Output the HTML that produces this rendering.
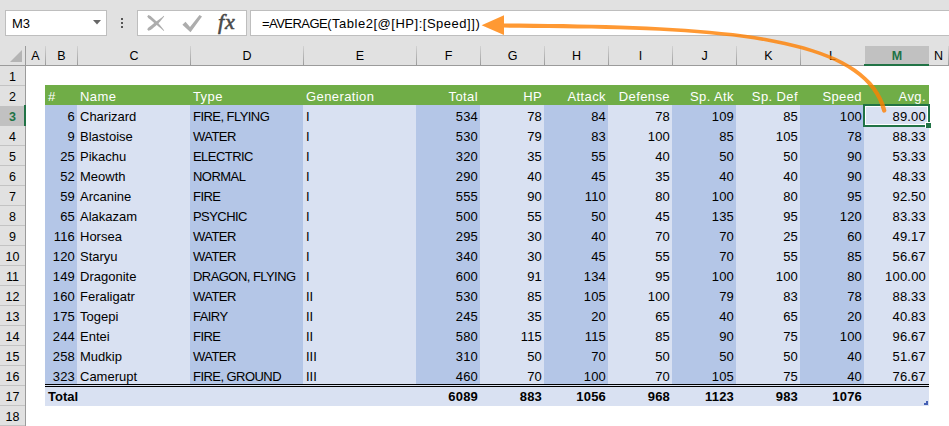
<!DOCTYPE html>
<html><head><meta charset="utf-8"><title>Table formula</title>
<style>
html,body{margin:0;padding:0}
body{width:949px;height:426px;overflow:hidden;position:relative;background:#fff;font-family:"Liberation Sans",sans-serif;font-size:13px;color:#000;line-height:20px}
div,span{position:absolute;box-sizing:border-box;white-space:nowrap}
.g{background:#e1e1e1}
.box{background:#fff;border:1px solid #bebebe;top:10px;height:26px}
.ch{top:46px;height:19px;text-align:center;line-height:21px;font-size:12.5px}
.rh{left:0;width:25px;height:20px;text-align:center;line-height:24px;font-size:12.5px}
.vs{top:46px;width:1px;height:19px;background:linear-gradient(to bottom,#d2d2d2,#9c9c9c)}
.hs{left:0;width:25px;height:1px;background:#c3c3c3}
.c{height:20px;line-height:23px;padding:0 3px}
.i{position:static}
.r{text-align:right}
.h{color:#fff}
.b{font-weight:bold}
.sel{background:#c1c1c1;color:#217346;font-weight:bold}
</style></head><body>

<div class="g" style="left:0;top:0;width:949px;height:66px"></div>
<div class="g" style="left:0;top:66px;width:26px;height:360px"></div>
<div class="box" style="left:5px;width:102px"><span style="left:6px;top:3px;font-size:13px;line-height:20px">M3</span><svg style="position:absolute;left:87px;top:9px" width="8" height="5" viewBox="0 0 8 5"><path d="M0 0H8L4 4.5Z" fill="#666"/></svg></div>
<div style="left:121px;top:18px;width:2px;height:2px;background:#555"></div>
<div style="left:121px;top:22px;width:2px;height:2px;background:#555"></div>
<div style="left:121px;top:26px;width:2px;height:2px;background:#555"></div>
<div class="box" style="left:137px;width:110px"><span style="left:80px;top:-2px;font-family:'Liberation Serif',serif;font-style:italic;font-size:22px;line-height:26px;color:#4a4a4a;letter-spacing:1px;-webkit-text-stroke:0.6px #4a4a4a">fx</span></div>
<svg style="position:absolute;left:0;top:0" width="260" height="45" viewBox="0 0 260 45"><path d="M147.2 16.5L148.5 18.3L150.3 19.6L152.0 21.0L153.7 22.5L155.3 23.9L157.1 25.3L158.8 26.7L160.5 28.1L162.1 29.6L163.8 31.1L164.2 30.5L162.9 28.8L161.5 27.0L160.1 25.3L158.6 23.6L157.2 21.9L155.5 20.4L153.9 18.9L152.2 17.5L150.6 16.1L148.4 15.1Z" fill="#adadad"/><path d="M148.4 30.8L150.6 30.0L152.3 28.7L154.0 27.3L155.6 26.0L157.2 24.6L158.7 23.0L160.1 21.4L161.5 19.7L162.9 18.1L164.2 16.4L163.8 15.8L162.1 17.2L160.4 18.5L158.7 19.8L157.0 21.1L155.3 22.3L153.6 23.6L151.9 25.0L150.2 26.2L148.5 27.5L147.2 29.2Z" fill="#adadad"/><path d="M182.4 24.7L185.5 21.8L190 27L199.5 15.1L202 16.6L190.5 32.2Z" fill="#adadad"/></svg>
<div class="box" style="left:250px;width:720px"><span id="fml" style="left:11px;top:3px;font-size:13px;line-height:20px;letter-spacing:0.52px"><span class="i" style="letter-spacing:-0.54px">=AVERAGE</span>(Table2[@[HP]:[Speed]])</span></div>
<div style="left:0;top:65px;width:949px;height:1px;background:#9b9b9b"></div>
<div style="left:25px;top:46px;width:1px;height:380px;background:#9b9b9b"></div>
<svg style="position:absolute;left:10px;top:50px" width="12" height="12" viewBox="0 0 12 12"><path d="M12 0V12H0Z" fill="#b4b4b4"/></svg>
<div class="ch" style="left:26px;width:19px">A</div>
<div class="vs" style="left:45px"></div>
<div class="ch" style="left:46px;width:31px">B</div>
<div class="vs" style="left:77px"></div>
<div class="ch" style="left:78px;width:112px">C</div>
<div class="vs" style="left:190px"></div>
<div class="ch" style="left:191px;width:112px">D</div>
<div class="vs" style="left:303px"></div>
<div class="ch" style="left:304px;width:112px">E</div>
<div class="vs" style="left:416px"></div>
<div class="ch" style="left:417px;width:63px">F</div>
<div class="vs" style="left:480px"></div>
<div class="ch" style="left:481px;width:63px">G</div>
<div class="vs" style="left:544px"></div>
<div class="ch" style="left:545px;width:63px">H</div>
<div class="vs" style="left:608px"></div>
<div class="ch" style="left:609px;width:63px">I</div>
<div class="vs" style="left:672px"></div>
<div class="ch" style="left:673px;width:63px">J</div>
<div class="vs" style="left:736px"></div>
<div class="ch" style="left:737px;width:63px">K</div>
<div class="vs" style="left:800px"></div>
<div class="ch" style="left:801px;width:63px">L</div>
<div class="ch sel" style="left:865px;width:64px">M</div>
<div class="ch" style="left:929px;width:19px">N</div>
<div class="vs" style="left:948px"></div>
<div style="left:864px;top:64px;width:65px;height:2px;background:#217346"></div>
<div class="rh" style="top:65px">1</div>
<div class="hs" style="top:85px"></div>
<div class="rh" style="top:85px">2</div>
<div class="rh" style="top:106px;height:20px;background:#c1c1c1"></div>
<div class="rh b" style="color:#217346;top:105px">3</div>
<div class="rh" style="top:125px">4</div>
<div class="hs" style="top:145px"></div>
<div class="rh" style="top:145px">5</div>
<div class="hs" style="top:165px"></div>
<div class="rh" style="top:165px">6</div>
<div class="hs" style="top:185px"></div>
<div class="rh" style="top:185px">7</div>
<div class="hs" style="top:205px"></div>
<div class="rh" style="top:205px">8</div>
<div class="hs" style="top:225px"></div>
<div class="rh" style="top:225px">9</div>
<div class="hs" style="top:245px"></div>
<div class="rh" style="top:245px">10</div>
<div class="hs" style="top:265px"></div>
<div class="rh" style="top:265px">11</div>
<div class="hs" style="top:285px"></div>
<div class="rh" style="top:285px">12</div>
<div class="hs" style="top:305px"></div>
<div class="rh" style="top:305px">13</div>
<div class="hs" style="top:325px"></div>
<div class="rh" style="top:325px">14</div>
<div class="hs" style="top:345px"></div>
<div class="rh" style="top:345px">15</div>
<div class="hs" style="top:365px"></div>
<div class="rh" style="top:365px">16</div>
<div class="hs" style="top:385px"></div>
<div class="rh" style="top:385px">17</div>
<div class="hs" style="top:405px"></div>
<div class="rh" style="top:405px">18</div>
<div class="hs" style="top:425px"></div>
<div style="left:24px;top:105px;width:2px;height:21px;background:#217346"></div>
<div style="left:45px;top:85px;width:884px;height:20px;background:#70ad47"></div>
<div style="left:45px;top:105px;width:32px;height:280px;background:#b4c6e7"></div>
<div style="left:77px;top:105px;width:113px;height:280px;background:#d9e1f2"></div>
<div style="left:190px;top:105px;width:113px;height:280px;background:#b4c6e7"></div>
<div style="left:303px;top:105px;width:113px;height:280px;background:#d9e1f2"></div>
<div style="left:416px;top:105px;width:64px;height:280px;background:#b4c6e7"></div>
<div style="left:480px;top:105px;width:64px;height:280px;background:#d9e1f2"></div>
<div style="left:544px;top:105px;width:64px;height:280px;background:#b4c6e7"></div>
<div style="left:608px;top:105px;width:64px;height:280px;background:#d9e1f2"></div>
<div style="left:672px;top:105px;width:64px;height:280px;background:#b4c6e7"></div>
<div style="left:736px;top:105px;width:64px;height:280px;background:#d9e1f2"></div>
<div style="left:800px;top:105px;width:64px;height:280px;background:#b4c6e7"></div>
<div style="left:864px;top:105px;width:65px;height:280px;background:#d9e1f2"></div>
<div style="left:45px;top:384px;width:884px;height:22px;background:#d9e1f2;border-top:3px double #000"></div>
<div class="c h" style="left:45px;top:85px;width:33px;letter-spacing:0.4px">#</div>
<div class="c h" style="left:77px;top:85px;width:114px;letter-spacing:0.4px">Name</div>
<div class="c h" style="left:190px;top:85px;width:114px;letter-spacing:0.4px">Type</div>
<div class="c h" style="left:303px;top:85px;width:114px;letter-spacing:0.4px">Generation</div>
<div class="c r h" style="left:416px;top:85px;width:65px;letter-spacing:0.4px">Total</div>
<div class="c r h" style="left:480px;top:85px;width:65px;letter-spacing:0.4px">HP</div>
<div class="c r h" style="left:544px;top:85px;width:65px;letter-spacing:0.4px">Attack</div>
<div class="c r h" style="left:608px;top:85px;width:65px;letter-spacing:0.4px">Defense</div>
<div class="c r h" style="left:672px;top:85px;width:65px;letter-spacing:0.4px">Sp. Atk</div>
<div class="c r h" style="left:736px;top:85px;width:65px;letter-spacing:0.4px">Sp. Def</div>
<div class="c r h" style="left:800px;top:85px;width:65px;letter-spacing:0.4px">Speed</div>
<div class="c r h" style="left:864px;top:85px;width:65px;letter-spacing:0.4px">Avg.</div>
<div class="c r" style="left:45px;top:105px;width:33px;letter-spacing:0.2px">6</div>
<div class="c" style="left:77px;top:105px;width:114px">Charizard</div>
<div class="c" style="left:190px;top:105px;width:114px;letter-spacing:-0.55px">FIRE, FLYING</div>
<div class="c" style="left:303px;top:105px;width:114px">I</div>
<div class="c r" style="left:416px;top:105px;width:65px;letter-spacing:0.2px">534</div>
<div class="c r" style="left:480px;top:105px;width:65px;letter-spacing:0.2px">78</div>
<div class="c r" style="left:544px;top:105px;width:65px;letter-spacing:0.2px">84</div>
<div class="c r" style="left:608px;top:105px;width:65px;letter-spacing:0.2px">78</div>
<div class="c r" style="left:672px;top:105px;width:65px;letter-spacing:0.2px">109</div>
<div class="c r" style="left:736px;top:105px;width:65px;letter-spacing:0.2px">85</div>
<div class="c r" style="left:800px;top:105px;width:65px;letter-spacing:0.2px">100</div>
<div class="c r" style="left:864px;top:105px;width:65px;letter-spacing:0.2px">89.00</div>
<div class="c r" style="left:45px;top:125px;width:33px;letter-spacing:0.2px">9</div>
<div class="c" style="left:77px;top:125px;width:114px">Blastoise</div>
<div class="c" style="left:190px;top:125px;width:114px;letter-spacing:-0.55px">WATER</div>
<div class="c" style="left:303px;top:125px;width:114px">I</div>
<div class="c r" style="left:416px;top:125px;width:65px;letter-spacing:0.2px">530</div>
<div class="c r" style="left:480px;top:125px;width:65px;letter-spacing:0.2px">79</div>
<div class="c r" style="left:544px;top:125px;width:65px;letter-spacing:0.2px">83</div>
<div class="c r" style="left:608px;top:125px;width:65px;letter-spacing:0.2px">100</div>
<div class="c r" style="left:672px;top:125px;width:65px;letter-spacing:0.2px">85</div>
<div class="c r" style="left:736px;top:125px;width:65px;letter-spacing:0.2px">105</div>
<div class="c r" style="left:800px;top:125px;width:65px;letter-spacing:0.2px">78</div>
<div class="c r" style="left:864px;top:125px;width:65px;letter-spacing:0.2px">88.33</div>
<div class="c r" style="left:45px;top:145px;width:33px;letter-spacing:0.2px">25</div>
<div class="c" style="left:77px;top:145px;width:114px">Pikachu</div>
<div class="c" style="left:190px;top:145px;width:114px;letter-spacing:-0.55px">ELECTRIC</div>
<div class="c" style="left:303px;top:145px;width:114px">I</div>
<div class="c r" style="left:416px;top:145px;width:65px;letter-spacing:0.2px">320</div>
<div class="c r" style="left:480px;top:145px;width:65px;letter-spacing:0.2px">35</div>
<div class="c r" style="left:544px;top:145px;width:65px;letter-spacing:0.2px">55</div>
<div class="c r" style="left:608px;top:145px;width:65px;letter-spacing:0.2px">40</div>
<div class="c r" style="left:672px;top:145px;width:65px;letter-spacing:0.2px">50</div>
<div class="c r" style="left:736px;top:145px;width:65px;letter-spacing:0.2px">50</div>
<div class="c r" style="left:800px;top:145px;width:65px;letter-spacing:0.2px">90</div>
<div class="c r" style="left:864px;top:145px;width:65px;letter-spacing:0.2px">53.33</div>
<div class="c r" style="left:45px;top:165px;width:33px;letter-spacing:0.2px">52</div>
<div class="c" style="left:77px;top:165px;width:114px">Meowth</div>
<div class="c" style="left:190px;top:165px;width:114px;letter-spacing:-0.55px">NORMAL</div>
<div class="c" style="left:303px;top:165px;width:114px">I</div>
<div class="c r" style="left:416px;top:165px;width:65px;letter-spacing:0.2px">290</div>
<div class="c r" style="left:480px;top:165px;width:65px;letter-spacing:0.2px">40</div>
<div class="c r" style="left:544px;top:165px;width:65px;letter-spacing:0.2px">45</div>
<div class="c r" style="left:608px;top:165px;width:65px;letter-spacing:0.2px">35</div>
<div class="c r" style="left:672px;top:165px;width:65px;letter-spacing:0.2px">40</div>
<div class="c r" style="left:736px;top:165px;width:65px;letter-spacing:0.2px">40</div>
<div class="c r" style="left:800px;top:165px;width:65px;letter-spacing:0.2px">90</div>
<div class="c r" style="left:864px;top:165px;width:65px;letter-spacing:0.2px">48.33</div>
<div class="c r" style="left:45px;top:185px;width:33px;letter-spacing:0.2px">59</div>
<div class="c" style="left:77px;top:185px;width:114px">Arcanine</div>
<div class="c" style="left:190px;top:185px;width:114px;letter-spacing:-0.55px">FIRE</div>
<div class="c" style="left:303px;top:185px;width:114px">I</div>
<div class="c r" style="left:416px;top:185px;width:65px;letter-spacing:0.2px">555</div>
<div class="c r" style="left:480px;top:185px;width:65px;letter-spacing:0.2px">90</div>
<div class="c r" style="left:544px;top:185px;width:65px;letter-spacing:0.2px">110</div>
<div class="c r" style="left:608px;top:185px;width:65px;letter-spacing:0.2px">80</div>
<div class="c r" style="left:672px;top:185px;width:65px;letter-spacing:0.2px">100</div>
<div class="c r" style="left:736px;top:185px;width:65px;letter-spacing:0.2px">80</div>
<div class="c r" style="left:800px;top:185px;width:65px;letter-spacing:0.2px">95</div>
<div class="c r" style="left:864px;top:185px;width:65px;letter-spacing:0.2px">92.50</div>
<div class="c r" style="left:45px;top:205px;width:33px;letter-spacing:0.2px">65</div>
<div class="c" style="left:77px;top:205px;width:114px">Alakazam</div>
<div class="c" style="left:190px;top:205px;width:114px;letter-spacing:-0.55px">PSYCHIC</div>
<div class="c" style="left:303px;top:205px;width:114px">I</div>
<div class="c r" style="left:416px;top:205px;width:65px;letter-spacing:0.2px">500</div>
<div class="c r" style="left:480px;top:205px;width:65px;letter-spacing:0.2px">55</div>
<div class="c r" style="left:544px;top:205px;width:65px;letter-spacing:0.2px">50</div>
<div class="c r" style="left:608px;top:205px;width:65px;letter-spacing:0.2px">45</div>
<div class="c r" style="left:672px;top:205px;width:65px;letter-spacing:0.2px">135</div>
<div class="c r" style="left:736px;top:205px;width:65px;letter-spacing:0.2px">95</div>
<div class="c r" style="left:800px;top:205px;width:65px;letter-spacing:0.2px">120</div>
<div class="c r" style="left:864px;top:205px;width:65px;letter-spacing:0.2px">83.33</div>
<div class="c r" style="left:45px;top:225px;width:33px;letter-spacing:0.2px">116</div>
<div class="c" style="left:77px;top:225px;width:114px">Horsea</div>
<div class="c" style="left:190px;top:225px;width:114px;letter-spacing:-0.55px">WATER</div>
<div class="c" style="left:303px;top:225px;width:114px">I</div>
<div class="c r" style="left:416px;top:225px;width:65px;letter-spacing:0.2px">295</div>
<div class="c r" style="left:480px;top:225px;width:65px;letter-spacing:0.2px">30</div>
<div class="c r" style="left:544px;top:225px;width:65px;letter-spacing:0.2px">40</div>
<div class="c r" style="left:608px;top:225px;width:65px;letter-spacing:0.2px">70</div>
<div class="c r" style="left:672px;top:225px;width:65px;letter-spacing:0.2px">70</div>
<div class="c r" style="left:736px;top:225px;width:65px;letter-spacing:0.2px">25</div>
<div class="c r" style="left:800px;top:225px;width:65px;letter-spacing:0.2px">60</div>
<div class="c r" style="left:864px;top:225px;width:65px;letter-spacing:0.2px">49.17</div>
<div class="c r" style="left:45px;top:245px;width:33px;letter-spacing:0.2px">120</div>
<div class="c" style="left:77px;top:245px;width:114px">Staryu</div>
<div class="c" style="left:190px;top:245px;width:114px;letter-spacing:-0.55px">WATER</div>
<div class="c" style="left:303px;top:245px;width:114px">I</div>
<div class="c r" style="left:416px;top:245px;width:65px;letter-spacing:0.2px">340</div>
<div class="c r" style="left:480px;top:245px;width:65px;letter-spacing:0.2px">30</div>
<div class="c r" style="left:544px;top:245px;width:65px;letter-spacing:0.2px">45</div>
<div class="c r" style="left:608px;top:245px;width:65px;letter-spacing:0.2px">55</div>
<div class="c r" style="left:672px;top:245px;width:65px;letter-spacing:0.2px">70</div>
<div class="c r" style="left:736px;top:245px;width:65px;letter-spacing:0.2px">55</div>
<div class="c r" style="left:800px;top:245px;width:65px;letter-spacing:0.2px">85</div>
<div class="c r" style="left:864px;top:245px;width:65px;letter-spacing:0.2px">56.67</div>
<div class="c r" style="left:45px;top:265px;width:33px;letter-spacing:0.2px">149</div>
<div class="c" style="left:77px;top:265px;width:114px">Dragonite</div>
<div class="c" style="left:190px;top:265px;width:114px;letter-spacing:-0.55px">DRAGON, FLYING</div>
<div class="c" style="left:303px;top:265px;width:114px">I</div>
<div class="c r" style="left:416px;top:265px;width:65px;letter-spacing:0.2px">600</div>
<div class="c r" style="left:480px;top:265px;width:65px;letter-spacing:0.2px">91</div>
<div class="c r" style="left:544px;top:265px;width:65px;letter-spacing:0.2px">134</div>
<div class="c r" style="left:608px;top:265px;width:65px;letter-spacing:0.2px">95</div>
<div class="c r" style="left:672px;top:265px;width:65px;letter-spacing:0.2px">100</div>
<div class="c r" style="left:736px;top:265px;width:65px;letter-spacing:0.2px">100</div>
<div class="c r" style="left:800px;top:265px;width:65px;letter-spacing:0.2px">80</div>
<div class="c r" style="left:864px;top:265px;width:65px;letter-spacing:0.2px">100.00</div>
<div class="c r" style="left:45px;top:285px;width:33px;letter-spacing:0.2px">160</div>
<div class="c" style="left:77px;top:285px;width:114px">Feraligatr</div>
<div class="c" style="left:190px;top:285px;width:114px;letter-spacing:-0.55px">WATER</div>
<div class="c" style="left:303px;top:285px;width:114px">II</div>
<div class="c r" style="left:416px;top:285px;width:65px;letter-spacing:0.2px">530</div>
<div class="c r" style="left:480px;top:285px;width:65px;letter-spacing:0.2px">85</div>
<div class="c r" style="left:544px;top:285px;width:65px;letter-spacing:0.2px">105</div>
<div class="c r" style="left:608px;top:285px;width:65px;letter-spacing:0.2px">100</div>
<div class="c r" style="left:672px;top:285px;width:65px;letter-spacing:0.2px">79</div>
<div class="c r" style="left:736px;top:285px;width:65px;letter-spacing:0.2px">83</div>
<div class="c r" style="left:800px;top:285px;width:65px;letter-spacing:0.2px">78</div>
<div class="c r" style="left:864px;top:285px;width:65px;letter-spacing:0.2px">88.33</div>
<div class="c r" style="left:45px;top:305px;width:33px;letter-spacing:0.2px">175</div>
<div class="c" style="left:77px;top:305px;width:114px">Togepi</div>
<div class="c" style="left:190px;top:305px;width:114px;letter-spacing:-0.55px">FAIRY</div>
<div class="c" style="left:303px;top:305px;width:114px">II</div>
<div class="c r" style="left:416px;top:305px;width:65px;letter-spacing:0.2px">245</div>
<div class="c r" style="left:480px;top:305px;width:65px;letter-spacing:0.2px">35</div>
<div class="c r" style="left:544px;top:305px;width:65px;letter-spacing:0.2px">20</div>
<div class="c r" style="left:608px;top:305px;width:65px;letter-spacing:0.2px">65</div>
<div class="c r" style="left:672px;top:305px;width:65px;letter-spacing:0.2px">40</div>
<div class="c r" style="left:736px;top:305px;width:65px;letter-spacing:0.2px">65</div>
<div class="c r" style="left:800px;top:305px;width:65px;letter-spacing:0.2px">20</div>
<div class="c r" style="left:864px;top:305px;width:65px;letter-spacing:0.2px">40.83</div>
<div class="c r" style="left:45px;top:325px;width:33px;letter-spacing:0.2px">244</div>
<div class="c" style="left:77px;top:325px;width:114px">Entei</div>
<div class="c" style="left:190px;top:325px;width:114px;letter-spacing:-0.55px">FIRE</div>
<div class="c" style="left:303px;top:325px;width:114px">II</div>
<div class="c r" style="left:416px;top:325px;width:65px;letter-spacing:0.2px">580</div>
<div class="c r" style="left:480px;top:325px;width:65px;letter-spacing:0.2px">115</div>
<div class="c r" style="left:544px;top:325px;width:65px;letter-spacing:0.2px">115</div>
<div class="c r" style="left:608px;top:325px;width:65px;letter-spacing:0.2px">85</div>
<div class="c r" style="left:672px;top:325px;width:65px;letter-spacing:0.2px">90</div>
<div class="c r" style="left:736px;top:325px;width:65px;letter-spacing:0.2px">75</div>
<div class="c r" style="left:800px;top:325px;width:65px;letter-spacing:0.2px">100</div>
<div class="c r" style="left:864px;top:325px;width:65px;letter-spacing:0.2px">96.67</div>
<div class="c r" style="left:45px;top:345px;width:33px;letter-spacing:0.2px">258</div>
<div class="c" style="left:77px;top:345px;width:114px">Mudkip</div>
<div class="c" style="left:190px;top:345px;width:114px;letter-spacing:-0.55px">WATER</div>
<div class="c" style="left:303px;top:345px;width:114px">III</div>
<div class="c r" style="left:416px;top:345px;width:65px;letter-spacing:0.2px">310</div>
<div class="c r" style="left:480px;top:345px;width:65px;letter-spacing:0.2px">50</div>
<div class="c r" style="left:544px;top:345px;width:65px;letter-spacing:0.2px">70</div>
<div class="c r" style="left:608px;top:345px;width:65px;letter-spacing:0.2px">50</div>
<div class="c r" style="left:672px;top:345px;width:65px;letter-spacing:0.2px">50</div>
<div class="c r" style="left:736px;top:345px;width:65px;letter-spacing:0.2px">50</div>
<div class="c r" style="left:800px;top:345px;width:65px;letter-spacing:0.2px">40</div>
<div class="c r" style="left:864px;top:345px;width:65px;letter-spacing:0.2px">51.67</div>
<div class="c r" style="left:45px;top:365px;width:33px;letter-spacing:0.2px">323</div>
<div class="c" style="left:77px;top:365px;width:114px">Camerupt</div>
<div class="c" style="left:190px;top:365px;width:114px;letter-spacing:-0.55px">FIRE, GROUND</div>
<div class="c" style="left:303px;top:365px;width:114px">III</div>
<div class="c r" style="left:416px;top:365px;width:65px;letter-spacing:0.2px">460</div>
<div class="c r" style="left:480px;top:365px;width:65px;letter-spacing:0.2px">70</div>
<div class="c r" style="left:544px;top:365px;width:65px;letter-spacing:0.2px">100</div>
<div class="c r" style="left:608px;top:365px;width:65px;letter-spacing:0.2px">70</div>
<div class="c r" style="left:672px;top:365px;width:65px;letter-spacing:0.2px">105</div>
<div class="c r" style="left:736px;top:365px;width:65px;letter-spacing:0.2px">75</div>
<div class="c r" style="left:800px;top:365px;width:65px;letter-spacing:0.2px">40</div>
<div class="c r" style="left:864px;top:365px;width:65px;letter-spacing:0.2px">76.67</div>
<div class="c b" style="left:45px;top:385px;width:33px">Total</div>
<div class="c r b" style="left:416px;top:385px;width:65px;letter-spacing:0.2px">6089</div>
<div class="c r b" style="left:480px;top:385px;width:65px;letter-spacing:0.2px">883</div>
<div class="c r b" style="left:544px;top:385px;width:65px;letter-spacing:0.2px">1056</div>
<div class="c r b" style="left:608px;top:385px;width:65px;letter-spacing:0.2px">968</div>
<div class="c r b" style="left:672px;top:385px;width:65px;letter-spacing:0.2px">1123</div>
<div class="c r b" style="left:736px;top:385px;width:65px;letter-spacing:0.2px">983</div>
<div class="c r b" style="left:800px;top:385px;width:65px;letter-spacing:0.2px">1076</div>
<div style="left:863px;top:104px;width:67px;height:23px;border:2px solid #217346;box-shadow:inset 0 0 0 1px #fff"></div>
<div style="left:925px;top:122px;width:6px;height:6px;background:#217346;border:1px solid #fff;border-right:0;border-bottom:0"></div>
<svg style="position:absolute;left:924px;top:401px" width="4" height="4" viewBox="0 0 4 4"><path d="M4 0V4H0V2H2V0Z" fill="#4560b4"/></svg>
<svg style="position:absolute;left:0;top:0" width="949" height="426" viewBox="0 0 949 426"><path d="M481.6 25.2L504.0 15.3L504.0 27.6L519.0 27.7L533.8 27.9L548.5 28.0L563.1 28.2L577.5 28.4L591.7 28.6L605.7 28.9L619.5 29.3L633.0 29.7L646.4 30.2L659.5 30.8L672.3 31.5L684.9 32.3L697.3 33.2L709.3 34.2L721.0 35.4L732.5 36.6L743.6 38.0L754.3 39.6L764.8 41.3L774.8 43.2L784.5 45.2L793.9 47.4L802.8 49.7L811.3 52.3L819.5 55.0L827.2 58.0L834.4 61.1L841.2 64.5L847.5 68.1L853.4 71.9L858.8 76.0L863.7 80.2L868.0 84.7L871.9 89.5L875.2 94.5L878.1 99.7L880.3 105.2L882.1 111.0L882.4 111.8L883.1 112.4L883.9 112.7L884.7 112.6L885.5 112.3L886.1 111.6L886.4 110.8L886.3 110.0L884.4 103.8L881.8 97.9L878.7 92.3L875.1 87.1L871.0 82.1L866.3 77.4L861.2 73.0L855.6 68.8L849.5 64.9L842.9 61.3L835.9 57.8L828.5 54.7L820.7 51.7L812.4 48.9L803.8 46.3L794.7 43.9L785.3 41.7L775.5 39.7L765.4 37.8L754.9 36.1L744.0 34.5L732.9 33.1L721.4 31.9L709.6 30.7L697.5 29.7L685.2 28.7L672.6 27.9L659.7 27.2L646.5 26.5L633.2 26.0L619.6 25.5L605.8 25.0L591.7 24.7L577.5 24.4L563.2 24.1L548.6 23.9L533.9 23.7L519.0 23.5L504.0 23.4L504.0 35.1Z" fill="rgba(255,128,0,0.8)"/></svg>
</body></html>
